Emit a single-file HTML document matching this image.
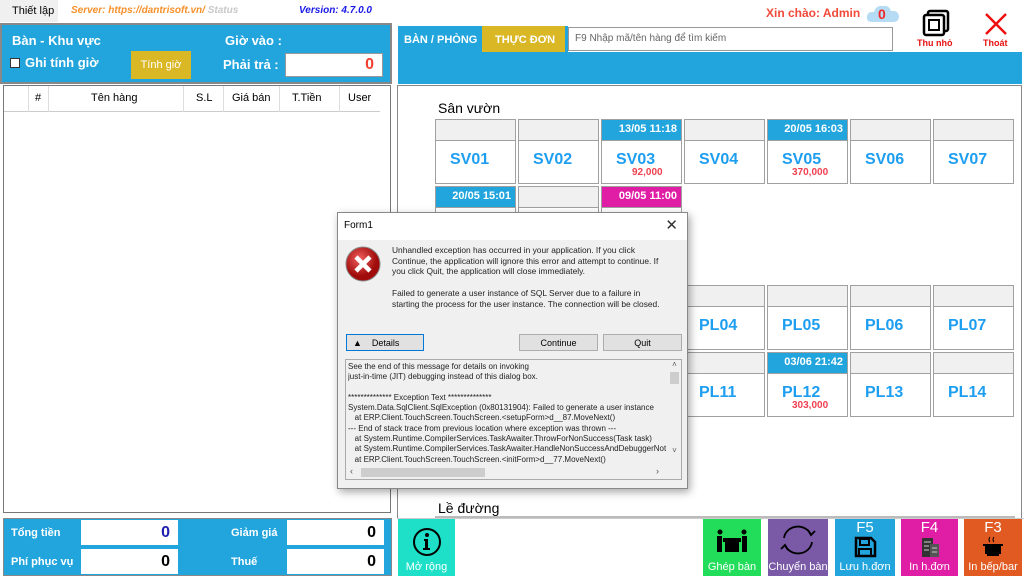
<!DOCTYPE html>
<html><head><meta charset="utf-8"><style>
*{margin:0;padding:0;box-sizing:border-box}
body{width:1024px;height:576px;position:relative;overflow:hidden;background:#f0f0f0;font-family:"Liberation Sans",Arial,sans-serif}
.a{position:absolute}
.t{position:absolute;width:81px}
.t .h{height:22px;background:#f0f0f0;border:1px solid #a0a0a0;color:#fff;font-weight:bold;font-size:11px;text-align:right;padding:3px 4px 0 0}
.t .b{height:43px;background:#fff;border:1px solid #a0a0a0;border-top:none;color:#1e9ef0;font-weight:bold;font-size:16px;padding:10px 0 0 14px;position:relative}
.t .b span{position:absolute;left:38px;top:26px;font-size:10px;color:#f04050;font-weight:bold}
.bl{background:#22a5dd!important}
.mg{background:#df1ea5!important}
.btn{position:absolute;top:519px;height:57px;color:#fff;font-size:11px;text-align:center}
.btn .k{font-size:15px;line-height:14px;margin-top:2px}
.btn .l{position:absolute;bottom:3px;width:100%}
.in{position:absolute;background:#fff;text-align:right;font-weight:bold;font-size:16px;padding:4px 8px 0 0}
</style></head><body>
<div class="a" style="left:0;top:0;width:58px;height:22px;background:#f0f0f0;font-size:11px;padding:5px 0 0 12px">Thiết lập</div>
<div class="a" style="left:0;top:0;width:1024px;height:22px;background:#fff;z-index:-1"></div>
<div class="a" style="left:71px;top:5px;font-size:10px;font-style:italic;font-weight:bold;color:#f7902a">Server: https://dantrisoft.vn/ <span style="color:#c8c8c8">Status</span></div>
<div class="a" style="left:299px;top:5px;font-size:10px;font-style:italic;font-weight:bold;color:#1a1ae8">Version: 4.7.0.0</div>
<div class="a" style="left:0;top:22px;width:1024px;height:554px;background:#fff;z-index:-1"></div>
<div class="a" style="left:766px;top:6px;font-size:12px;font-weight:bold;color:#f24a3a">Xin chào: Admin</div>
<svg class="a" style="left:866px;top:2px" width="34" height="22"><path d="M6 20 Q0 20 1 14 Q2 9 8 10 Q10 3 17 4 Q23 3 25 9 Q32 8 33 14 Q33 20 27 20Z" fill="#b6dcf5"/><text x="12" y="17" font-size="14" font-weight="bold" fill="#f02828" font-family="Liberation Sans">0</text></svg>
<svg class="a" style="left:921px;top:9px" width="30" height="30"><rect x="7" y="2" width="20" height="20" rx="2" fill="#fff" stroke="#000" stroke-width="2.5"/><rect x="3" y="6" width="20" height="20" rx="2" fill="#fff" stroke="#000" stroke-width="2.5"/><rect x="8" y="11" width="10" height="10" fill="none" stroke="#000" stroke-width="2"/></svg>
<div class="a" style="left:917px;top:38px;font-size:9px;font-weight:bold;color:#e81010">Thu nhỏ</div>
<svg class="a" style="left:984px;top:12px" width="24" height="24"><path d="M2 2 L22 22 M22 2 L2 22" stroke="#ee1010" stroke-width="2.5"/></svg>
<div class="a" style="left:983px;top:38px;font-size:9px;font-weight:bold;color:#e81010">Thoát</div>

<div class="a" style="left:0;top:23px;width:392px;height:61px;background:#22a5dd;border:2px solid #888"></div>
<div class="a" style="left:12px;top:33px;color:#fff;font-weight:bold;font-size:13px">Bàn - Khu vực</div>
<div class="a" style="left:225px;top:33px;color:#fff;font-weight:bold;font-size:13px">Giờ vào :</div>
<div class="a" style="left:10px;top:58px;width:10px;height:10px;background:#fff;border:1px solid #333"></div>
<div class="a" style="left:25px;top:55px;color:#fff;font-weight:bold;font-size:13px">Ghi tính giờ</div>
<div class="a" style="left:131px;top:51px;width:60px;height:28px;background:#dab725;color:#fff;font-size:11px;text-align:center;padding-top:8px">Tính giờ</div>
<div class="a" style="left:223px;top:57px;color:#fff;font-weight:bold;font-size:13px">Phải trả :</div>
<div class="in" style="left:285px;top:53px;width:98px;height:24px;color:#f04030;border:1px solid #999;padding-top:2px">0</div>

<div class="a" style="left:3px;top:85px;width:388px;height:428px;background:#fff;border:1px solid #777"></div>
<div class="a" style="left:4px;top:86px;width:376px;height:26px;border-bottom:1px solid #ccc;font-size:11px">
<span class="a" style="left:24px;top:0;height:26px;border-left:1px solid #ddd;width:20px;padding:6px 0 0 6px">#</span>
<span class="a" style="left:44px;top:0;height:26px;border-left:1px solid #ddd;width:135px;padding:6px 0 0 42px">Tên hàng</span>
<span class="a" style="left:179px;top:0;height:26px;border-left:1px solid #ddd;width:40px;padding:6px 0 0 12px">S.L</span>
<span class="a" style="left:219px;top:0;height:26px;border-left:1px solid #ddd;width:56px;padding:6px 0 0 8px">Giá bán</span>
<span class="a" style="left:275px;top:0;height:26px;border-left:1px solid #ddd;width:60px;padding:6px 0 0 12px">T.Tiền</span>
<span class="a" style="left:335px;top:0;height:26px;border-left:1px solid #ddd;width:41px;padding:6px 0 0 8px">User</span>
</div>

<div class="a" style="left:3px;top:518px;width:389px;height:58px;background:#22a5dd;border:1px solid #888"></div>
<div class="a" style="left:11px;top:527px;color:#fff;font-weight:bold;font-size:11px">Tổng tiền</div>
<div class="a" style="left:11px;top:556px;color:#fff;font-weight:bold;font-size:11px">Phí phục vụ</div>
<div class="a" style="left:231px;top:527px;color:#fff;font-weight:bold;font-size:11px">Giảm giá</div>
<div class="a" style="left:231px;top:556px;color:#fff;font-weight:bold;font-size:11px">Thuế</div>
<div class="in" style="left:81px;top:520px;width:97px;height:25px;color:#2020b0">0</div>
<div class="in" style="left:81px;top:549px;width:97px;height:25px;color:#000">0</div>
<div class="in" style="left:287px;top:520px;width:97px;height:25px;color:#000">0</div>
<div class="in" style="left:287px;top:549px;width:97px;height:25px;color:#000">0</div>

<div class="a" style="left:398px;top:26px;width:170px;height:58px;background:#22a5dd"></div>
<div class="a" style="left:398px;top:52px;width:624px;height:32px;background:#22a5dd"></div>
<div class="a" style="left:404px;top:34px;color:#fff;font-weight:bold;font-size:11px">BÀN / PHÒNG</div>
<div class="a" style="left:482px;top:26px;width:83px;height:26px;background:#dab725;color:#fff;font-weight:bold;font-size:11px;padding:8px 0 0 13px">THỰC ĐƠN</div>
<div class="a" style="left:568px;top:27px;width:325px;height:24px;background:#fff;border:1px solid #999;font-size:10px;color:#666;padding:5px 0 0 6px">F9 Nhập mã/tên hàng để tìm kiếm</div>
<div class="a" style="left:397px;top:85px;width:625px;height:434px;background:#fff;border:1px solid #888;border-bottom:none"></div>
<div class="a" style="left:438px;top:100px;font-size:14px">Sân vườn</div>
<div class="a" style="left:438px;top:500px;font-size:14px">Lề đường</div>

<div class="t" style="left:435px;top:119px"><div class="h"></div><div class="b">SV01</div></div>
<div class="t" style="left:518px;top:119px"><div class="h"></div><div class="b">SV02</div></div>
<div class="t" style="left:601px;top:119px"><div class="h bl">13/05 11:18</div><div class="b">SV03<span style="left:30px">92,000</span></div></div>
<div class="t" style="left:684px;top:119px"><div class="h"></div><div class="b">SV04</div></div>
<div class="t" style="left:767px;top:119px"><div class="h bl">20/05 16:03</div><div class="b">SV05<span style="left:24px">370,000</span></div></div>
<div class="t" style="left:850px;top:119px"><div class="h"></div><div class="b">SV06</div></div>
<div class="t" style="left:933px;top:119px"><div class="h"></div><div class="b">SV07</div></div>

<div class="t" style="left:435px;top:186px"><div class="h bl">20/05 15:01</div><div class="b"></div></div>
<div class="t" style="left:518px;top:186px"><div class="h"></div><div class="b"></div></div>
<div class="t" style="left:601px;top:186px"><div class="h mg">09/05 11:00</div><div class="b"></div></div>

<div class="t" style="left:684px;top:285px"><div class="h"></div><div class="b">PL04</div></div>
<div class="t" style="left:767px;top:285px"><div class="h"></div><div class="b">PL05</div></div>
<div class="t" style="left:850px;top:285px"><div class="h"></div><div class="b">PL06</div></div>
<div class="t" style="left:933px;top:285px"><div class="h"></div><div class="b">PL07</div></div>
<div class="t" style="left:684px;top:352px"><div class="h"></div><div class="b">PL11</div></div>
<div class="t" style="left:767px;top:352px"><div class="h bl">03/06 21:42</div><div class="b">PL12<span style="left:24px">303,000</span></div></div>
<div class="t" style="left:850px;top:352px"><div class="h"></div><div class="b">PL13</div></div>
<div class="t" style="left:933px;top:352px"><div class="h"></div><div class="b">PL14</div></div>
<div class="a" style="left:435px;top:516px;width:580px;height:2px;background:#bbb"></div>

<div class="a" style="left:397px;top:518px;width:627px;height:58px;background:#fff;border-top:1px solid #ccc"></div>
<div class="btn" style="left:398px;width:57px;background:#1ee0c8;color:#fff"><svg width="30" height="30" style="margin-top:8px"><circle cx="15" cy="15" r="13" fill="none" stroke="#000" stroke-width="2"/><circle cx="15" cy="8" r="2" fill="#000"/><path d="M12 12h4v9h2v2h-7v-2h2v-7h-1z" fill="#000"/></svg><div class="l">Mở rộng</div></div>
<div class="btn" style="left:703px;width:58px;background:#22dd5a"><svg width="34" height="24" style="margin-top:10px"><circle cx="5" cy="3" r="2.5" fill="#000"/><circle cx="29" cy="3" r="2.5" fill="#000"/><rect x="2" y="7" width="5" height="16" fill="#000"/><rect x="27" y="7" width="5" height="16" fill="#000"/><rect x="8" y="9" width="18" height="4" fill="#000"/><rect x="10" y="13" width="14" height="10" fill="#000"/></svg><div class="l">Ghép bàn</div></div>
<div class="btn" style="left:768px;width:60px;background:#7a5aa6"><svg width="40" height="34" style="margin-top:4px"><path d="M6 15 A14 13 0 0 1 33 12 M34 19 A14 13 0 0 1 7 22" fill="none" stroke="#000" stroke-width="1.8"/><path d="M30 7 L33 12 L37 8 M3 26 L7 22 L10 27" fill="none" stroke="#000" stroke-width="1.8"/></svg><div class="l">Chuyển bàn</div></div>
<div class="btn" style="left:835px;width:60px;background:#22a5dd"><div class="k">F5</div><svg width="24" height="24"><path d="M3 3h15l4 4v14H3z" fill="none" stroke="#000" stroke-width="2.5"/><rect x="7" y="4" width="9" height="6" fill="none" stroke="#000" stroke-width="2"/><rect x="6" y="14" width="12" height="7" fill="none" stroke="#000" stroke-width="2"/></svg><div class="l">Lưu h.đơn</div></div>
<div class="btn" style="left:901px;width:57px;background:#df1ea5"><div class="k">F4</div><svg width="24" height="24"><rect x="4" y="3" width="11" height="19" fill="#333"/><rect x="12" y="9" width="9" height="13" fill="#555"/><path d="M6 7h7M6 11h5M6 15h5M14 13h5M14 17h5" stroke="#ccc"/></svg><div class="l">In h.đơn</div></div>
<div class="btn" style="left:964px;width:58px;background:#e05a22"><div class="k">F3</div><svg width="24" height="24"><path d="M9 2q-2 3 0 5M13 2q-2 3 0 5" stroke="#000" fill="none"/><rect x="2" y="9" width="20" height="2" fill="#000"/><path d="M4 11h16v8H4z" fill="#000"/><rect x="6" y="19" width="12" height="2" fill="#000"/></svg><div class="l">In bếp/bar</div></div>

<div class="a" style="left:337px;top:212px;width:351px;height:277px;background:#f0f0f0;border:1px solid #888;box-shadow:2px 3px 8px rgba(0,0,0,.35)">
<div class="a" style="left:0;top:0;width:349px;height:27px;background:#fff;font-size:10px;padding:7px 0 0 6px">Form1<span class="a" style="right:9px;top:3px;font-size:15px;color:#333">✕</span></div>
<svg class="a" style="left:7px;top:33px" width="36" height="36"><defs><radialGradient id="g" cx=".4" cy=".35"><stop offset="0" stop-color="#f26060"/><stop offset="1" stop-color="#a00c0c"/></radialGradient></defs><circle cx="18" cy="18" r="17" fill="url(#g)" stroke="#888"/><path d="M11 11L25 25M25 11L11 25" stroke="#fff" stroke-width="4.5"/></svg>
<div class="a" style="left:54px;top:32px;width:278px;font-size:8.4px;line-height:10.7px;color:#222">Unhandled exception has occurred in your application. If you click Continue, the application will ignore this error and attempt to continue. If you click Quit, the application will close immediately.<br><br>Failed to generate a user instance of SQL Server due to a failure in starting the process for the user instance. The connection will be closed.</div>
<div class="a" style="left:8px;top:121px;width:78px;height:17px;background:#e1e1e1;border:1px solid #0078d7;font-size:9px;padding:3px 0 0 6px">▲ &nbsp;&nbsp;&nbsp;Details</div>
<div class="a" style="left:181px;top:121px;width:79px;height:17px;background:#e1e1e1;border:1px solid #adadad;font-size:9px;text-align:center;padding-top:3px">Continue</div>
<div class="a" style="left:265px;top:121px;width:79px;height:17px;background:#e1e1e1;border:1px solid #adadad;font-size:9px;text-align:center;padding-top:3px">Quit</div>
<div class="a" style="left:7px;top:146px;width:337px;height:121px;background:#f0f0f0;border:1px solid #aaa;overflow:hidden">
<div class="a" style="left:2px;top:2px;width:318px;font-size:8px;line-height:10.3px;white-space:nowrap;overflow:hidden;color:#222">See the end of this message for details on invoking<br>just-in-time (JIT) debugging instead of this dialog box.<br><br>************** Exception Text **************<br>System.Data.SqlClient.SqlException (0x80131904): Failed to generate a user instance<br>&nbsp;&nbsp;&nbsp;at ERP.Client.TouchScreen.TouchScreen.&lt;setupForm&gt;d__87.MoveNext()<br>--- End of stack trace from previous location where exception was thrown ---<br>&nbsp;&nbsp;&nbsp;at System.Runtime.CompilerServices.TaskAwaiter.ThrowForNonSuccess(Task task)<br>&nbsp;&nbsp;&nbsp;at System.Runtime.CompilerServices.TaskAwaiter.HandleNonSuccessAndDebuggerNotification<br>&nbsp;&nbsp;&nbsp;at ERP.Client.TouchScreen.TouchScreen.&lt;initForm&gt;d__77.MoveNext()</div>
<div class="a" style="left:322px;top:0;width:13px;height:106px;background:#f0f0f0;font-size:8px;color:#555;text-align:center">˄<div style="margin:3px 2px;height:12px;background:#cdcdcd"></div><div style="margin-top:62px">˅</div></div>
<div class="a" style="left:0;top:106px;width:322px;height:13px;background:#f0f0f0;font-size:9px;color:#555"><span class="a" style="left:4px">‹</span><div class="a" style="left:15px;top:2px;width:124px;height:9px;background:#cdcdcd"></div><span class="a" style="left:310px">›</span></div>
</div>
</div>
</body></html>
